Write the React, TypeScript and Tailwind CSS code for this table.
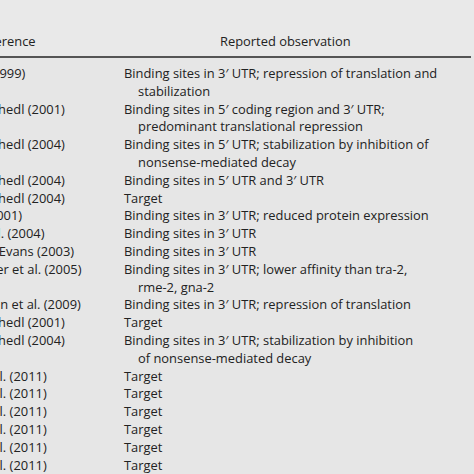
import React from "react";

const rows: [string, string[]][] = [
  ["Jan et al. (1999)", ["Binding sites in 3\u2032 UTR; repression of translation and", "stabilization"]],
  ["Lee and Schedl (2001)", ["Binding sites in 5\u2032 coding region and 3\u2032 UTR;", "predominant translational repression"]],
  ["Lee and Schedl (2004)", ["Binding sites in 5\u2032 UTR; stabilization by inhibition of", "nonsense-mediated decay"]],
  ["Lee and Schedl (2004)", ["Binding sites in 5\u2032 UTR and 3\u2032 UTR"]],
  ["Lee and Schedl (2004)", ["Target"]],
  ["Xu et al. (2001)", ["Binding sites in 3\u2032 UTR; reduced protein expression"]],
  ["Mootz et al. (2004)", ["Binding sites in 3\u2032 UTR"]],
  ["Marin and Evans (2003)", ["Binding sites in 3\u2032 UTR"]],
  ["Schumacher et al. (2005)", ["Binding sites in 3\u2032 UTR; lower affinity than tra-2,", "rme-2, gna-2"]],
  ["Biedermann et al. (2009)", ["Binding sites in 3\u2032 UTR; repression of translation"]],
  ["Lee and Schedl (2001)", ["Target"]],
  ["Lee and Schedl (2004)", ["Binding sites in 3\u2032 UTR; stabilization by inhibition", "of nonsense-mediated decay"]],
  ["Wright et al. (2011)", ["Target"]],
  ["Wright et al. (2011)", ["Target"]],
  ["Wright et al. (2011)", ["Target"]],
  ["Wright et al. (2011)", ["Target"]],
  ["Wright et al. (2011)", ["Target"]],
  ["Wright et al. (2011)", ["Target"]],
];

export default function App() {
  return (
    <div
      className="w-[474px] h-[474px] overflow-hidden bg-[#e6e6e6] text-[#222222] text-[12.9px] leading-[17.8px]"
      style={{ fontFamily: "'Open Sans', Lato, sans-serif" }}
    >
      <div className="h-[56px] flex items-end pb-[5px] bg-[#e9e9e9]">
        <div className="w-[124px] shrink-0 flex">
          <span className="-ml-[25px] whitespace-nowrap">Reference</span>
        </div>
        <div className="pl-[96px] whitespace-nowrap">Reported observation</div>
      </div>
      <div className="h-[2px] bg-[#555555] mr-[3px]" />
      <div className="pt-[7px] grid grid-cols-[190px_1fr] -ml-[66px]">
        {rows.map(([ref, obs], i) => (
          <React.Fragment key={i}>
            <div className="whitespace-nowrap">{ref}</div>
            <div className="flex flex-col whitespace-nowrap">
              {obs.map((line, j) => (
                <span key={j} className={j > 0 ? "pl-[14px]" : ""}>
                  {line}
                </span>
              ))}
            </div>
          </React.Fragment>
        ))}
      </div>
    </div>
  );
}
